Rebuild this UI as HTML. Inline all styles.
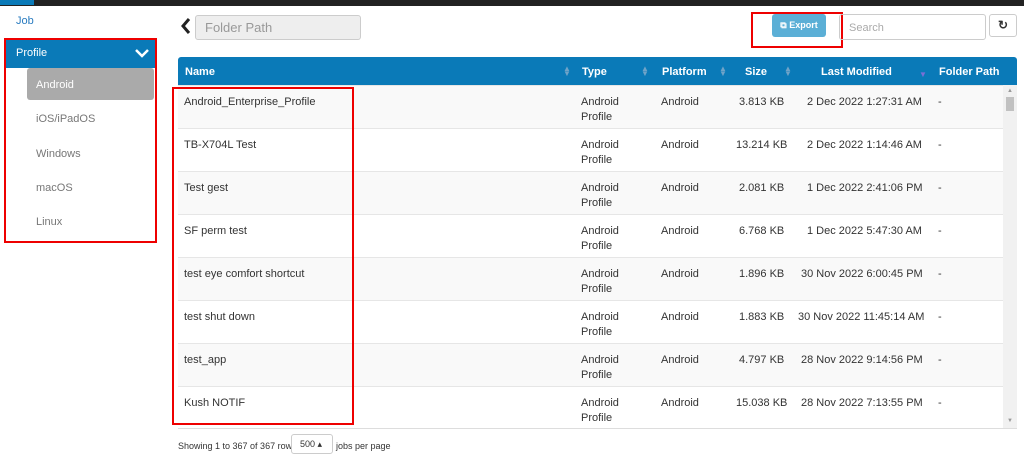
<!DOCTYPE html>
<html><head><style>
*{box-sizing:border-box;margin:0;padding:0}
body{width:1024px;height:448px;overflow:hidden;background:#fff;font-family:"Liberation Sans",sans-serif;font-size:11px;color:#333;position:relative}
.abs{position:absolute}
.top{left:0;top:0;width:1024px;height:6px;background:#222}
.row{position:absolute;left:178px;width:825px;height:43px;border-top:1px solid #e6e6e6}
.row div{position:absolute;top:9px;line-height:15px}
.th{position:absolute;top:66px;color:#fff;font-weight:bold;font-size:11px}
.sort{position:absolute;top:66px;color:#6fa3c8;font-size:8px;line-height:5px}
</style></head><body>
<div class="abs top"></div><div class="abs" style="left:0;top:0;width:34px;height:5px;background:#0a7ab8"></div>
<div class="abs" style="left:16px;top:15px;color:#2a7cc0;font-size:11px">Job</div>
<div class="abs" style="left:5px;top:39px;width:150px;height:29px;background:#0a7ab8"></div>
<div class="abs" style="left:16px;top:47px;color:#fff;font-size:11px">Profile</div>
<svg class="abs" style="left:135px;top:48px" width="14" height="10"><path d="M1 2 L7 8 L13 2" stroke="#fff" stroke-width="2.5" fill="none"/></svg>
<div class="abs" style="left:27px;top:68px;width:127px;height:32px;background:#aaa;border-radius:3px"></div>
<div class="abs" style="left:36px;top:79px;color:#fff">Android</div>
<div class="abs" style="left:36px;top:113px;color:#777">iOS/iPadOS</div>
<div class="abs" style="left:36px;top:148px;color:#777">Windows</div>
<div class="abs" style="left:36px;top:182px;color:#777">macOS</div>
<div class="abs" style="left:36px;top:216px;color:#777">Linux</div>
<div class="abs" style="left:4px;top:38px;width:153px;height:205px;border:2px solid #e00"></div>
<svg class="abs" style="left:180px;top:17px" width="12" height="18"><path d="M9 2 L3 9 L9 16" stroke="#222" stroke-width="3" fill="none"/></svg>
<div class="abs" style="left:195px;top:15px;width:166px;height:25px;background:#eee;border:1px solid #ccc;border-radius:3px;color:#999;font-size:13px;padding:4px 9px">Folder Path</div>
<div class="abs" style="left:772px;top:14px;width:54px;height:23px;background:#5bafd6;border-radius:3px;color:#fff;font-size:9px;font-weight:bold;line-height:23px;text-align:center">⧉ Export</div>
<div class="abs" style="left:751px;top:12px;width:92px;height:36px;border:2px solid #e00"></div>
<div class="abs" style="left:839px;top:14px;width:147px;height:26px;border:1px solid #ccc;border-radius:3px;color:#aaa;font-size:11px;padding:7px 9px">Search</div>
<div class="abs" style="left:989px;top:14px;width:28px;height:23px;border:1px solid #ccc;border-radius:3px;text-align:center;font-size:12px;font-weight:bold;line-height:21px">↻</div>
<div class="abs" style="left:178px;top:57px;width:839px;height:28px;background:#0a7ab8;border-radius:3px 3px 0 0"></div>
<div class="th" style="left:185px">Name</div><div class="th" style="left:582px">Type</div><div class="th" style="left:662px">Platform</div><div class="th" style="left:745px">Size</div><div class="th" style="left:821px">Last Modified</div><div class="th" style="left:939px">Folder Path</div>
<div class="sort" style="left:563px">▲<br>▼</div><div class="sort" style="left:641px">▲<br>▼</div><div class="sort" style="left:719px">▲<br>▼</div><div class="sort" style="left:784px">▲<br>▼</div>
<div class="abs" style="left:919px;top:70px;color:#7b6fd6;font-size:8px">▼</div>
<div class="row" style="top:85px;background:#f9f9f9"><div style="left:6px">Android_Enterprise_Profile</div><div style="left:403px">Android<br>Profile</div><div style="left:483px">Android</div><div style="left:561px">3.813 KB</div><div style="left:629px">2 Dec 2022 1:27:31 AM</div><div style="left:760px">-</div></div>
<div class="row" style="top:128px"><div style="left:6px">TB-X704L Test</div><div style="left:403px">Android<br>Profile</div><div style="left:483px">Android</div><div style="left:558px">13.214 KB</div><div style="left:629px">2 Dec 2022 1:14:46 AM</div><div style="left:760px">-</div></div>
<div class="row" style="top:171px;background:#f9f9f9"><div style="left:6px">Test gest</div><div style="left:403px">Android<br>Profile</div><div style="left:483px">Android</div><div style="left:561px">2.081 KB</div><div style="left:629px">1 Dec 2022 2:41:06 PM</div><div style="left:760px">-</div></div>
<div class="row" style="top:214px"><div style="left:6px">SF perm test</div><div style="left:403px">Android<br>Profile</div><div style="left:483px">Android</div><div style="left:561px">6.768 KB</div><div style="left:629px">1 Dec 2022 5:47:30 AM</div><div style="left:760px">-</div></div>
<div class="row" style="top:257px;background:#f9f9f9"><div style="left:6px">test eye comfort shortcut</div><div style="left:403px">Android<br>Profile</div><div style="left:483px">Android</div><div style="left:561px">1.896 KB</div><div style="left:623px">30 Nov 2022 6:00:45 PM</div><div style="left:760px">-</div></div>
<div class="row" style="top:300px"><div style="left:6px">test shut down</div><div style="left:403px">Android<br>Profile</div><div style="left:483px">Android</div><div style="left:561px">1.883 KB</div><div style="left:620px">30 Nov 2022 11:45:14 AM</div><div style="left:760px">-</div></div>
<div class="row" style="top:343px;background:#f9f9f9"><div style="left:6px">test_app</div><div style="left:403px">Android<br>Profile</div><div style="left:483px">Android</div><div style="left:561px">4.797 KB</div><div style="left:623px">28 Nov 2022 9:14:56 PM</div><div style="left:760px">-</div></div>
<div class="row" style="top:386px"><div style="left:6px">Kush NOTIF</div><div style="left:403px">Android<br>Profile</div><div style="left:483px">Android</div><div style="left:558px">15.038 KB</div><div style="left:623px">28 Nov 2022 7:13:55 PM</div><div style="left:760px">-</div></div>
<div class="abs" style="left:178px;top:428px;width:839px;height:1px;background:#ddd"></div>
<div class="abs" style="left:1003px;top:85px;width:14px;height:343px;background:#f1f1f1"></div>
<div class="abs" style="left:1006px;top:97px;width:8px;height:14px;background:#c1c1c1"></div>
<div class="abs" style="left:1007px;top:88px;font-size:6px;color:#999">▲</div>
<div class="abs" style="left:1007px;top:418px;font-size:6px;color:#999">▼</div>
<div class="abs" style="left:172px;top:87px;width:182px;height:338px;border:2px solid #e00"></div>
<div class="abs" style="left:178px;top:441px;font-size:9px;color:#333">Showing 1 to 367 of 367 rows</div>
<div class="abs" style="left:291px;top:434px;width:42px;height:20px;border:1px solid #ccc;border-radius:3px;font-size:9px;padding:4px 8px;background:#fff">500 ▴</div>
<div class="abs" style="left:336px;top:441px;font-size:9px">jobs per page</div>
</body></html>
